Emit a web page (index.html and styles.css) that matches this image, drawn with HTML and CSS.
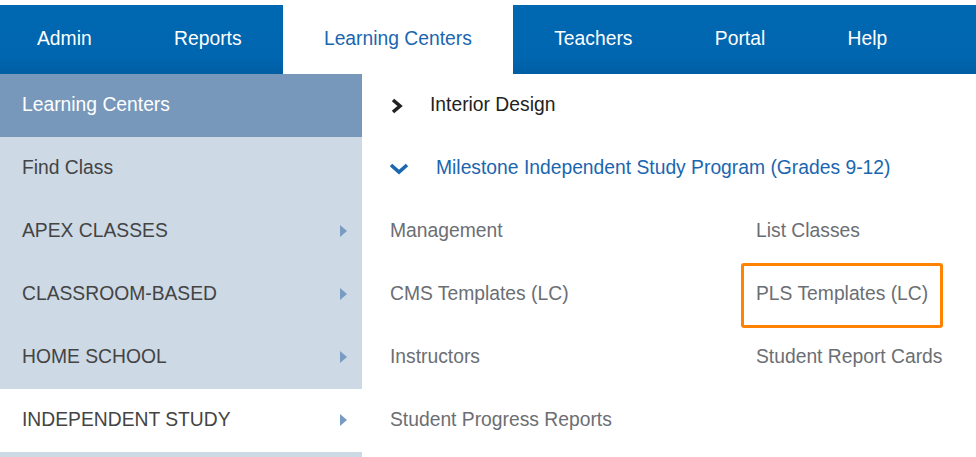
FILE: index.html
```html
<!DOCTYPE html>
<html>
<head>
<meta charset="utf-8">
<link rel="stylesheet" href="styles.css">
</head>
<body>
<div class="page">
  <nav class="topnav">
    <a class="tab first">Admin</a>
    <a class="tab">Reports</a>
    <a class="tab active">Learning Centers</a>
    <a class="tab">Teachers</a>
    <a class="tab">Portal</a>
    <a class="tab">Help</a>
  </nav>
  <div class="main">
    <aside class="sidebar">
      <div class="side-head">Learning Centers</div>
      <div class="side-item">Find Class</div>
      <div class="side-item">APEX CLASSES<span class="tri"></span></div>
      <div class="side-item">CLASSROOM-BASED<span class="tri"></span></div>
      <div class="side-item">HOME SCHOOL<span class="tri"></span></div>
      <div class="side-item selected">INDEPENDENT STUDY<span class="tri"></span></div>
    </aside>
    <section class="content">
      <div class="tree-row">
        <svg class="chev-right" width="14" height="16" viewBox="0 0 14 16"><polyline points="3,2 10,8 3,14" fill="none" stroke="#222" stroke-width="3.6"/></svg>
        <span class="tree-label">Interior Design</span>
      </div>
      <div class="tree-row open">
        <svg class="chev-down" width="20" height="13" viewBox="0 0 20 13"><polyline points="2,3 10,10 18,3" fill="none" stroke="#1a66b0" stroke-width="3.6"/></svg>
        <span class="tree-label">Milestone Independent Study Program (Grades 9-12)</span>
      </div>
      <div class="links">
        <div class="link">Management</div>
        <div class="link">List Classes</div>
        <div class="link">CMS Templates (LC)</div>
        <div class="link hl">PLS Templates (LC)</div>
        <div class="link">Instructors</div>
        <div class="link">Student Report Cards</div>
        <div class="link">Student Progress Reports</div>
      </div>
    </section>
  </div>
</div>
</body>
</html>
```

FILE: styles.css
```css
html, body {
  margin: 0;
  padding: 0;
  background: #fff;
}
body {
  font-family: "Liberation Sans", Arial, sans-serif;
  font-size: 19.3px;
  width: 976px;
  height: 457px;
  overflow: hidden;
}
.page {
  padding-top: 5px;
}
.topnav {
  display: flex;
  height: 69px;
  background: linear-gradient(#0067b1 0%, #0066b0 75%, #005ea3 100%);
}
.tab {
  display: flex;
  align-items: center;
  padding: 0 41.2px 2px;
  color: #fff;
  white-space: nowrap;
}
.tab.first {
  padding-left: 37px;
}
.tab.active {
  background: #fff;
  color: #1a66b0;
}
.main {
  display: flex;
  height: 383px;
  overflow: hidden;
}
.sidebar {
  width: 362px;
  flex: none;
  background: #cdd9e5;
}
.side-head {
  height: 63px;
  box-sizing: border-box;
  display: flex;
  align-items: center;
  padding: 0 0 2px 22px;
  background: #7798bb;
  color: #fff;
}
.side-item {
  height: 63px;
  box-sizing: border-box;
  display: flex;
  align-items: center;
  justify-content: space-between;
  padding: 0 15px 2px 22px;
  color: #444;
}
.side-item.selected {
  background: #fff;
}
.tri {
  width: 0;
  height: 0;
  border-top: 6.5px solid transparent;
  border-bottom: 6.5px solid transparent;
  border-left: 7px solid #7b9cc2;
}
.content {
  flex: 1;
  padding-left: 27px;
}
.tree-row {
  height: 63px;
  box-sizing: border-box;
  padding-bottom: 2px;
  display: flex;
  align-items: center;
  color: #222;
}
.chev-right {
  margin-left: 1px;
  margin-right: 26px;
  margin-top: 2px;
}
.tree-row.open {
  color: #1a66b0;
}
.chev-down {
  margin-left: 0;
  margin-right: 27px;
  margin-top: 2px;
}
.links {
  display: grid;
  grid-template-columns: 366px auto;
  grid-auto-rows: 63px;
}
.link {
  display: flex;
  align-items: center;
  box-sizing: border-box;
  padding: 0 0 2px 1px;
  color: #6b6e73;
  position: relative;
  white-space: nowrap;
}
.link.hl::after {
  content: "";
  position: absolute;
  left: -14px;
  top: 0;
  width: 202px;
  height: 65px;
  box-sizing: border-box;
  border: 3px solid #ff8200;
  border-radius: 3px;
}
```
